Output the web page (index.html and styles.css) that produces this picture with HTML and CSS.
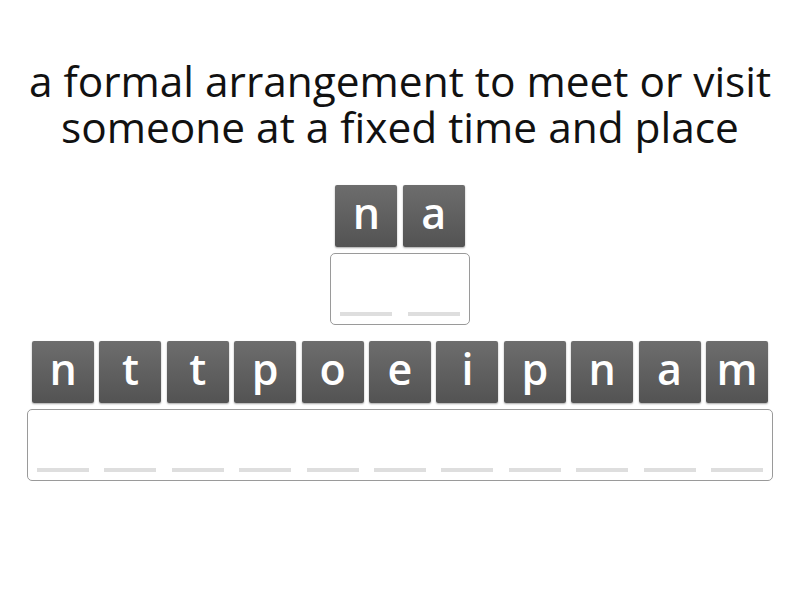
FILE: index.html
```html
<!DOCTYPE html>
<html lang="en">
<head>
    <meta charset="UTF-8">
    <meta name="viewport" content="width=device-width, initial-scale=1.0">
    <title>Anagram</title>
    <link rel="stylesheet" href="styles.css">
</head>
<body>
    <div class="game">
        <h1 class="clue">a formal arrangement to meet or visit someone at a fixed time and place</h1>

        <div class="word">
            <div class="tiles">
                <div class="tile">n</div>
                <div class="tile">a</div>
            </div>
            <div class="answer">
                <span class="slot"></span>
                <span class="slot"></span>
            </div>
        </div>

        <div class="word">
            <div class="tiles">
                <div class="tile">n</div>
                <div class="tile">t</div>
                <div class="tile">t</div>
                <div class="tile">p</div>
                <div class="tile">o</div>
                <div class="tile">e</div>
                <div class="tile">i</div>
                <div class="tile">p</div>
                <div class="tile">n</div>
                <div class="tile">a</div>
                <div class="tile">m</div>
            </div>
            <div class="answer">
                <span class="slot"></span>
                <span class="slot"></span>
                <span class="slot"></span>
                <span class="slot"></span>
                <span class="slot"></span>
                <span class="slot"></span>
                <span class="slot"></span>
                <span class="slot"></span>
                <span class="slot"></span>
                <span class="slot"></span>
                <span class="slot"></span>
            </div>
        </div>
    </div>
</body>
</html>
```

FILE: styles.css
```css
/* Basic Reset */
* {
    margin: 0;
    padding: 0;
    box-sizing: border-box;
}

body {
    font-family: 'Open Sans', 'Noto Sans', sans-serif;
    background: #ffffff;
    color: #111111;
}

.game {
    display: flex;
    flex-direction: column;
    align-items: center;
    padding-top: 58px;
}

/* Clue */
.clue {
    font-size: 42.4px;
    font-weight: 400;
    line-height: 46px;
    text-align: center;
    margin-bottom: 35px;
}

/* Word block */
.word {
    display: flex;
    flex-direction: column;
    align-items: center;
    margin-bottom: 16px;
}

.tiles {
    display: flex;
    gap: 5.4px;
    margin-bottom: 6px;
}

.tile {
    width: 62px;
    height: 62px;
    display: flex;
    justify-content: center;
    align-items: center;
    padding-bottom: 7px;
    font-size: 43px;
    font-weight: 600;
    line-height: 1;
    color: #ffffff;
    background: linear-gradient(#6d6d6d, #535353);
    border-radius: 2px;
    box-shadow: 0 1px 2px rgba(0,0,0,0.35);
}

/* Answer box */
.answer {
    display: flex;
    align-items: flex-end;
    gap: 5.4px;
    height: 72px;
    padding: 0 4px 8px;
    border: 1px solid #9a9a9a;
    border-radius: 5px;
}

.slot {
    width: 62px;
    height: 4px;
    padding: 0 5px;
    background: #dedede;
    background-clip: content-box;
}
```
